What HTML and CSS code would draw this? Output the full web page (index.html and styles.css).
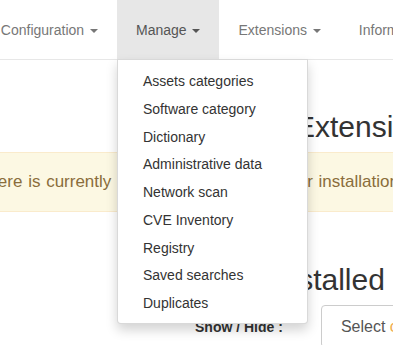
FILE: index.html
```html
<!DOCTYPE html>
<html lang="en">
<head>
    <meta charset="UTF-8">
    <title>Manage Extensions</title>
    <link rel="stylesheet" href="styles.css">
</head>
<body>
    <nav class="navbar">
        <ul class="nav">
            <li><a href="#">Configuration <span class="caret"></span></a></li>
            <li class="open">
                <a href="#">Manage <span class="caret"></span></a>
                <ul class="dropdown-menu">
                    <li><a href="#">Assets categories</a></li>
                    <li><a href="#">Software category</a></li>
                    <li><a href="#">Dictionary</a></li>
                    <li><a href="#">Administrative data</a></li>
                    <li><a href="#">Network scan</a></li>
                    <li><a href="#">CVE Inventory</a></li>
                    <li><a href="#">Registry</a></li>
                    <li><a href="#">Saved searches</a></li>
                    <li><a href="#">Duplicates</a></li>
                </ul>
            </li>
            <li><a href="#">Extensions <span class="caret"></span></a></li>
            <li><a href="#">Information <span class="caret"></span></a></li>
        </ul>
    </nav>

    <div class="content">
        <h2>Install Extensions</h2>
        <div class="alert">There is currently no extension available for installation</div>
        <h2 class="installed">Installed</h2>
        <div class="form-row">
            <label>Show / Hide :</label>
            <button class="select-btn">Select <span class="hint">columns</span></button>
        </div>
    </div>
</body>
</html>
```

FILE: styles.css
```css
body {
    font-family: 'Liberation Sans', Arial, sans-serif;
    font-size: 14px;
    margin: 0;
    padding: 0;
    background: #fff;
    color: #333;
    overflow: hidden;
}

.navbar {
    height: 59px;
    background: #fff;
    border-bottom: 1px solid #e7e7e7;
    position: relative;
    z-index: 10;
}

.nav {
    display: flex;
    list-style: none;
    margin: 0 0 0 -18.2px;
    padding: 0;
    white-space: nowrap;
}

.nav > li {
    position: relative;
}

.nav > li > a {
    display: block;
    padding: 20px 19px 19px;
    line-height: 20px;
    color: #777;
    text-decoration: none;
}

.nav > li.open > a {
    background: #e7e7e7;
    color: #555;
}

.caret {
    display: inline-block;
    width: 0;
    height: 0;
    margin-left: 2px;
    vertical-align: middle;
    border-top: 4px solid;
    border-right: 4px solid transparent;
    border-left: 4px solid transparent;
}

.dropdown-menu {
    position: absolute;
    top: 100%;
    left: 0;
    width: 191px;
    box-sizing: border-box;
    list-style: none;
    margin: 0;
    padding: 8px 0 5px;
    background: #fff;
    border: 1px solid rgba(0,0,0,0.15);
    border-radius: 0 0 4px 4px;
    box-shadow: 0 6px 12px rgba(0,0,0,0.175);
}

.dropdown-menu a {
    display: block;
    padding: 4px 25px;
    line-height: 19.75px;
    color: #333;
    text-decoration: none;
}

.content {
    display: flex;
    flex-direction: column;
    width: 722px;
    margin-left: -38px;
    padding-top: 49.6px;
}

.content h2 {
    margin: 0;
    font-size: 30px;
    font-weight: normal;
    line-height: 33px;
    text-align: center;
    color: #333;
    padding-left: 4px;
}

.alert {
    margin-top: 9.4px;
    padding: 17px 15px;
    font-size: 17px;
    line-height: 24.3px;
    white-space: nowrap;
    word-spacing: 1px;
    color: #8a6d3b;
    background: #fcf8e3;
    border: 1px solid #faebcc;
    border-radius: 4px;
}

.content h2.installed {
    margin-top: 50.3px;
    padding-left: 12px;
}

.form-row {
    display: flex;
    align-items: baseline;
    gap: 38px;
    margin-top: 9px;
    padding-left: 233px;
    white-space: nowrap;
}

.form-row label {
    font-weight: bold;
    color: #333;
}

.select-btn {
    font-family: inherit;
    font-size: 16px;
    line-height: 21.3px;
    padding: 10px 19px;
    color: #555;
    background: #fff;
    border: 1px solid #ccc;
    border-radius: 4px;
}

.hint {
    color: #f0ad4e;
}
```
